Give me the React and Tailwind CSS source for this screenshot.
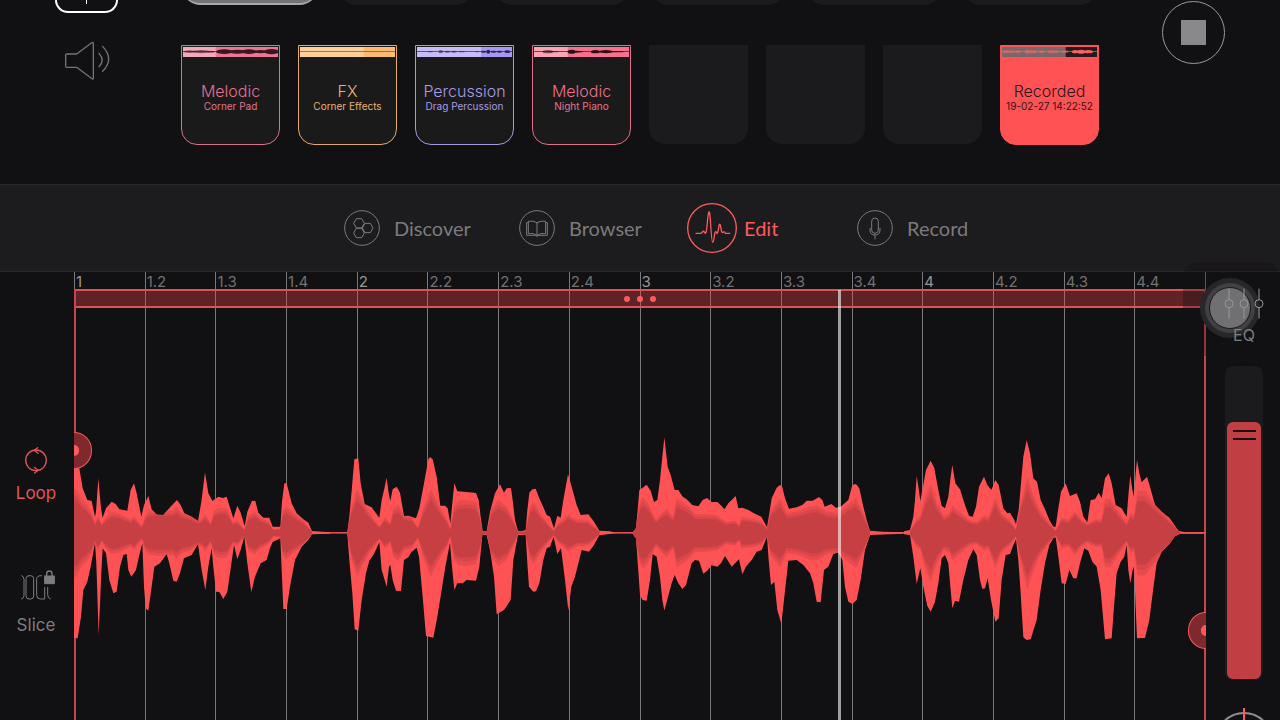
import { useState } from "react";
import clsx from "clsx";

const BEATS = [
  "1", "1.2", "1.3", "1.4",
  "2", "2.2", "2.3", "2.4",
  "3", "3.2", "3.3", "3.4",
  "4", "4.2", "4.3", "4.4",
];

// Waveform units: 3 per pixel, MID is the zero line.
const MID = 339;

// One entry per phrase of the recording; x values are relative to offset.
const PHRASES = [
  {
    offset: 0,
    top: "222,140 238,145 248,205 262,240 275,243 285,290 288,275 295,175 303,265 308,293 318,265 335,245 347,252 358,268 382,272 392,210 402,190 410,220 424,290 432,255 445,228 455,268 470,284 490,285 510,262 531,240 542,255 553,280 575,290 594,303 604,245 615,157 625,220 637,243 655,230 668,234 680,230 700,295 712,257 722,278 734,318 742,275 756,242 766,243 775,278 790,293 808,293 818,320 841,320 846,245 853,190 860,190 875,250 890,280 910,298 925,308 936,333 990,337",
    bottom: "222,655 233,655 243,590 250,510 262,485 272,440 285,370 289,430 296,645 304,460 308,385 318,400 328,480 340,520 350,515 360,440 370,405 380,402 385,450 394,470 408,450 418,405 427,370 432,500 437,565 445,572 455,500 463,440 480,430 500,402 508,430 520,482 530,485 540,460 552,415 575,405 594,372 605,450 616,510 625,440 635,385 640,440 648,515 658,516 670,537 682,515 690,460 702,375 712,418 722,390 733,350 742,430 754,517 765,470 782,430 800,420 810,385 818,366 841,355 846,470 850,567 860,567 870,500 885,420 905,380 925,360 936,343 990,341",
    core: [[222, 100], [232, 95], [245, 75], [262, 62], [275, 45], [285, 22], [294, 40], [305, 20], [318, 35], [335, 47], [360, 43], [380, 35], [392, 30], [402, 38], [415, 25], [426, 15], [436, 40], [445, 48], [460, 50], [480, 52], [505, 50], [518, 50], [530, 58], [545, 45], [570, 40], [592, 28], [605, 30], [616, 42], [632, 22], [642, 50], [660, 57], [680, 55], [698, 25], [712, 28], [734, 8], [745, 40], [765, 48], [780, 35], [805, 25], [820, 8], [841, 10], [848, 50], [858, 60], [880, 45], [910, 28], [936, 3]],
  },
  {
    offset: 990,
    top: "52,335 58,290 66,200 73,118 85,115 92,190 104,252 125,262 148,293 155,240 162,210 170,173 176,220 181,243 188,208 200,200 210,218 222,288 235,287 258,295 268,265 282,190 295,118 300,111 308,118 320,170 331,257 345,257 353,265 361,310 367,250 373,190 382,214 410,216 438,219 446,240 452,290 458,333 470,333 480,275 495,220 510,193 522,218 530,205 543,204 548,240 555,300 564,332 573,334 587,330 592,270 598,218 607,208 617,206 628,235 640,262 650,285 660,290 672,325 682,287 692,293 700,240 714,163 725,200 740,255 752,285 775,283 790,302 808,332 840,334 856,338",
    bottom: "52,343 58,420 67,520 74,628 85,632 95,540 108,460 118,422 132,402 148,367 155,450 170,500 177,440 181,435 188,480 198,512 213,513 222,420 235,412 245,395 260,383 267,410 278,530 288,648 310,653 322,590 335,510 346,440 360,368 366,440 373,510 382,490 398,490 410,480 438,482 448,440 457,345 470,345 480,390 492,470 500,583 522,570 542,540 550,420 564,345 587,345 592,430 597,500 610,515 618,514 628,490 640,420 650,385 660,380 671,350 682,402 693,385 705,480 715,572 724,500 735,470 755,390 777,395 790,378 808,346 856,340",
    core: [[52, 3], [65, 60], [82, 99], [100, 70], [118, 45], [148, 15], [165, 35], [181, 22], [190, 55], [205, 63], [222, 40], [245, 35], [264, 12], [280, 55], [302, 99], [318, 75], [335, 50], [350, 32], [361, 8], [372, 60], [385, 72], [410, 74], [438, 70], [448, 45], [458, 4], [470, 4], [485, 55], [505, 74], [530, 60], [550, 30], [564, 3], [587, 4], [600, 60], [612, 70], [630, 45], [655, 20], [671, 5], [685, 22], [700, 30], [714, 42], [740, 30], [775, 28], [808, 4]],
  },
  {
    offset: 1860,
    top: "38,338 48,325 53,270 58,210 68,203 80,194 92,212 102,246 112,240 120,180 127,110 133,52 143,140 152,165 164,210 175,210 188,230 200,238 217,255 235,259 248,240 261,234 275,246 292,246 305,258 313,268 325,250 347,228 355,265 367,263 385,270 405,281 424,290 441,322 448,280 455,235 470,203 480,195 486,198 495,235 507,266 530,262 548,254 560,242 578,242 597,231 607,240 614,260 634,252 648,263 662,260 685,240 697,195 708,192 718,205 730,260 740,300 750,332 790,335 850,337",
    bottom: "38,341 48,355 54,440 60,525 68,540 80,542 90,480 98,402 110,410 120,470 127,540 133,572 143,535 155,490 164,465 175,490 187,507 198,495 215,430 225,420 237,422 250,461 262,452 275,436 292,440 303,430 315,408 335,440 357,418 367,463 378,440 395,420 410,395 425,390 441,350 446,420 453,495 463,485 472,570 484,612 492,540 505,422 530,420 550,435 570,460 580,490 590,545 602,547 612,450 625,440 640,402 655,397 667,420 675,500 685,545 697,552 710,540 722,480 735,390 750,345 850,341",
    core: [[38, 2], [50, 30], [60, 70], [70, 80], [85, 65], [108, 30], [125, 45], [140, 55], [160, 35], [170, 78], [185, 70], [205, 60], [225, 42], [260, 42], [290, 40], [318, 25], [345, 28], [358, 18], [365, 35], [400, 32], [425, 25], [441, 10], [452, 50], [480, 78], [500, 45], [530, 48], [570, 60], [590, 62], [620, 48], [655, 45], [680, 62], [708, 78], [725, 55], [750, 5]],
  },
  {
    offset: 2670,
    top: "42,334 60,330 70,290 75,240 80,168 86,205 91,243 98,205 108,150 122,122 133,145 145,210 155,258 165,265 175,230 182,170 187,135 196,190 210,208 225,255 237,287 248,290 258,260 267,200 282,170 292,195 304,210 316,180 326,195 340,265 352,280 360,278 370,295 378,312 386,270 393,190 400,110 410,60 420,100 430,175 441,185 452,240 465,268 478,300 490,320 497,320 505,265 513,215 527,190 540,228 560,220 570,245 580,290 592,307 602,240 615,238 626,218 635,235 645,175 656,160 665,190 677,255 695,265 710,290 716,215 721,165 727,210 732,230 737,160 741,120 748,160 755,187 771,170 780,200 795,255 815,275 838,293 850,310 865,332 885,337 940,337",
    bottom: "42,343 60,345 70,410 80,492 91,445 100,500 112,558 122,575 135,545 145,490 155,415 165,405 175,430 182,510 187,565 195,543 207,545 220,480 235,420 250,388 260,405 270,480 277,507 285,505 293,475 303,540 316,605 326,595 335,480 347,405 360,402 370,375 378,358 385,420 392,520 400,652 410,660 422,658 440,600 452,510 465,430 478,375 490,355 497,352 505,410 515,490 527,492 538,450 550,475 560,475 570,430 583,385 595,392 607,425 620,440 632,510 645,658 665,655 672,560 680,460 692,425 703,410 710,375 715,450 721,490 728,450 732,440 737,560 741,655 765,654 778,600 788,520 800,430 815,395 838,372 855,348 870,341 940,341",
    core: [[60, 4], [80, 32], [91, 38], [105, 80], [122, 110], [140, 70], [162, 38], [178, 45], [187, 62], [205, 50], [240, 28], [260, 25], [282, 40], [295, 35], [316, 80], [335, 45], [360, 28], [378, 8], [390, 60], [412, 127], [430, 85], [450, 50], [478, 22], [497, 5], [515, 35], [535, 30], [555, 50], [575, 30], [592, 22], [620, 32], [635, 30], [645, 75], [660, 78], [680, 55], [710, 22], [722, 45], [732, 40], [742, 95], [765, 95], [790, 70], [815, 50], [850, 20], [870, 3]],
  },
];

const LAYERS = [
  { gain: 1.34, fill: "#e84b4e" },
  { gain: 1.16, fill: "#d84649" },
  { gain: 1, fill: "#c63f42" },
];

function outline({ top, bottom }) {
  return `${top} ${bottom.split(" ").reverse().join(" ")}`;
}

function mirrored(core, gain) {
  const upper = core.map(([x, a]) => `${x},${MID - a * gain}`);
  const lower = core.map(([x, a]) => `${x},${MID + a * gain}`).reverse();
  return [...upper, ...lower].join(" ");
}

function Waveform() {
  return (
    <svg
      className="absolute inset-x-0 top-[158px] h-[220px] w-full"
      viewBox="222 30 3396 660"
      preserveAspectRatio="none"
      aria-hidden="true"
    >
      <rect x="222" y={MID - 3} width="3396" height="5" fill="#e64a4d" />
      {PHRASES.map((phrase, i) => (
        <g key={phrase.offset} transform={`translate(${phrase.offset} 0)`}>
          <clipPath id={`phrase-${i}`}>
            <polygon points={outline(phrase)} />
          </clipPath>
          <polygon points={outline(phrase)} fill="#ff5255" />
          <g clipPath={`url(#phrase-${i})`}>
            {LAYERS.map(({ gain, fill }) => (
              <polygon
                key={fill}
                points={mirrored(phrase.core, gain)}
                fill={fill}
              />
            ))}
          </g>
        </g>
      ))}
    </svg>
  );
}

// blobs: [centre x, half width, half height] on a 288 x 30 strip
const TILES = [
  {
    title: "Melodic",
    name: "Corner Pad",
    tone: "border-[#d9708c] text-[#e2718f]",
    base: "#ee7596",
    played: "#f4a9bb",
    wave: "#3a1620",
    progress: 99,
    blobs: [[20, 18, 4], [55, 25, 5], [85, 12, 3], [125, 25, 7], [165, 28, 6], [200, 22, 7], [235, 24, 5], [268, 22, 8]],
  },
  {
    title: "FX",
    name: "Corner Effects",
    tone: "border-[#e3ab66] text-[#eab272]",
    base: "#fdbb72",
    played: "#fecf9b",
    wave: "#6b4a26",
    progress: 193,
    blobs: [],
  },
  {
    title: "Percussion",
    name: "Drag Percussion",
    tone: "border-[#a39ae0] text-[#a99be6]",
    base: "#a797f3",
    played: "#c7bbf8",
    wave: "#2b2350",
    progress: 194,
    blobs: [[40, 8, 2], [72, 7, 5], [92, 9, 3], [112, 9, 3], [135, 10, 2], [182, 5, 2], [202, 8, 3], [216, 6, 6], [232, 9, 3], [250, 8, 3], [274, 9, 4]],
  },
  {
    title: "Melodic",
    name: "Night Piano",
    tone: "border-[#dc7086] text-[#e8728c]",
    base: "#f7718f",
    played: "#fba5b4",
    wave: "#2a1018",
    progress: 102,
    blobs: [[42, 16, 5], [58, 18, 2], [114, 12, 6], [128, 20, 3], [186, 14, 5], [218, 20, 5], [245, 30, 2]],
  },
  null,
  null,
  null,
  {
    title: "Recorded",
    name: "19-02-27 14:22:52",
    tone: "border-[#ff5255] bg-[#ff5255] text-[#2c1517]",
    base: "#231b1d",
    played: "#75696b",
    wave: "#ff5f63",
    progress: 193,
    blobs: [[10, 10, 5], [26, 12, 4], [48, 10, 4], [78, 10, 6], [96, 12, 5], [120, 10, 4], [148, 10, 5], [164, 10, 4], [190, 12, 4], [222, 10, 5], [240, 12, 6], [262, 14, 5]],
  },
];

function Tile({ tile }) {
  if (!tile) {
    return <div className="h-[99px] rounded-b-2xl bg-[#1b1a1c]" />;
  }
  return (
    <button
      className={clsx(
        "flex h-[100px] flex-col overflow-hidden rounded-b-2xl border p-px",
        !tile.tone.includes("bg-") && "bg-[#1b1a1b]",
        tile.tone,
      )}
    >
      <svg
        className="h-[10px] w-full shrink-0"
        viewBox="0 0 288 30"
        preserveAspectRatio="none"
        aria-hidden="true"
      >
        <rect width="288" height="30" fill={tile.base} />
        <rect width={tile.progress} height="30" fill={tile.played} />
        <rect y="13" width="288" height="2" fill={tile.wave} />
        {tile.blobs.map(([x, rx, ry]) => (
          <ellipse
            key={x}
            cx={x}
            cy="14"
            rx={rx}
            ry={ry}
            fill={tile.wave}
            opacity={x < tile.progress ? 0.6 : 1}
          />
        ))}
      </svg>
      <span className="mt-[25px] w-full text-center text-base leading-[18px] font-light">
        {tile.title}
      </span>
      <span className="w-full text-center text-[10px] leading-3 whitespace-nowrap">
        {tile.name}
      </span>
    </button>
  );
}

function Header() {
  return (
    <header className="flex h-[184px] shrink-0 items-start">
      <div className="flex w-[181px] shrink-0 flex-col">
        <button
          aria-label="Add"
          className="ml-[55px] flex h-[13px] w-[63px] justify-center rounded-b-[14px] border-2 border-t-0 border-white"
        >
          <span className="h-1 w-px bg-white" />
        </button>
        <button aria-label="Volume" className="mt-[28px] ml-[64px] w-[46px]">
          <svg
            className="h-[40px] w-[46px]"
            viewBox="192 123 138 120"
            fill="none"
            stroke="#747375"
            strokeWidth="4"
            strokeLinejoin="round"
            strokeLinecap="round"
          >
            <path d="M200 162H230L274 129Q280 125 280 131V234Q280 240 274 235L230 202H200Q197 202 197 199V165Q197 162 200 162Z" />
            <path d="M297 160Q316 181 297 200M308 139Q344 178 308 214" />
          </svg>
        </button>
      </div>

      <div className="flex min-w-0 flex-1 flex-col gap-10">
        {/* upper tile row, scrolled out except for its lower edge */}
        <div className="flex h-[5px] items-end gap-[18px] overflow-hidden">
          <div className="h-[100px] flex-1 rounded-b-[20px] border-b-2 border-[#a9a8aa] bg-[#747375]" />
          {[1, 2, 3, 4, 5].map((n) => (
            <div
              key={n}
              className="h-[100px] flex-1 rounded-b-[20px] bg-[#1b1a1c]"
            />
          ))}
        </div>
        <div className="grid grid-cols-8 gap-[18px]">
          {TILES.map((tile, i) => (
            <Tile key={i} tile={tile} />
          ))}
        </div>
      </div>

      <div className="w-[181px] shrink-0 pt-px pl-[63px]">
        <button
          aria-label="Stop"
          className="flex size-[63px] items-center justify-center rounded-full border border-[#9a999b]"
        >
          <span className="size-[25px] bg-[#89888a]" />
        </button>
      </div>
    </header>
  );
}

function DiscoverIcon() {
  return (
    <g>
      {[[45, 40], [71, 54], [45, 69]].map(([x, y]) => (
        <polygon
          key={`${x}-${y}`}
          points={`${x - 16},${y} ${x - 8},${y - 14} ${x + 8},${y - 14} ${x + 16},${y} ${x + 8},${y + 14} ${x - 8},${y + 14}`}
        />
      ))}
    </g>
  );
}

function BookIcon() {
  return (
    <path d="M54 38Q42 31 28 34V71Q43 68 54 76Q65 68 80 71V34Q66 31 54 38V76M28 38H23V76H49L54 79L59 76H85V38H80" />
  );
}

function MicIcon() {
  return (
    <path d="M44 34Q44 24 54 24T64 34V60Q64 70 54 70T44 60ZM39 54V60Q39 75 54 75T69 60V54M54 75V88" />
  );
}

const TABS = [
  { id: "discover", label: "Discover", Icon: DiscoverIcon },
  { id: "browser", label: "Browser", Icon: BookIcon },
  { id: "edit", label: "Edit" },
  { id: "record", label: "Record", Icon: MicIcon },
];

function TabIcon({ Icon }) {
  if (!Icon) {
    return (
      <svg
        className="size-[50px]"
        viewBox="0 0 150 150"
        fill="none"
        stroke="currentColor"
        strokeWidth="4"
        strokeLinejoin="round"
        strokeLinecap="round"
      >
        <circle cx="75" cy="75" r="73" />
        <path d="M27 91H40Q44 91 47 86Q50 82 54 90Q58 95 61 60Q66 -2 70 50Q74 118 77 118Q80 118 83 92Q86 80 90 92Q93 90 96 68Q99 56 102 76Q104 92 108 88Q112 84 115 91H128" />
      </svg>
    );
  }
  return (
    <svg
      className="size-[36px]"
      viewBox="0 0 108 108"
      fill="none"
      stroke="currentColor"
      strokeWidth="3"
      strokeLinejoin="round"
    >
      <circle cx="54" cy="54" r="52" />
      <Icon />
    </svg>
  );
}

function Tabs() {
  return (
    <nav className="flex h-[88px] shrink-0 items-center justify-center border-y border-[#29282a] bg-[#1c1b1d] pl-[34px] font-['Lato',sans-serif] text-[20px]">
      {TABS.map(({ id, label, Icon }) => (
        <button
          key={id}
          className={clsx(
            "flex items-center gap-[7px]",
            id === "edit" ? "w-[163px] text-[#ff5a5d]" : "text-[#7b7a7c]",
            id === "record" && "w-[127px]",
            (id === "discover" || id === "browser") && "w-[175px]",
          )}
        >
          <span className="flex w-[50px] shrink-0 justify-center">
            <TabIcon Icon={Icon} />
          </span>
          {label}
        </button>
      ))}
    </nav>
  );
}

function Tools() {
  return (
    <aside className="flex w-[74px] shrink-0 flex-col items-center gap-[64px] pt-[175px] pr-[2px] text-[17px] leading-6">
      <button className="flex flex-col items-center gap-[7px] text-[#e2565a]">
        <svg
          className="h-[27px] w-[24px]"
          viewBox="72 82 72 81"
          fill="none"
          stroke="currentColor"
          strokeWidth="4"
          strokeLinecap="round"
          strokeLinejoin="round"
        >
          <circle cx="108" cy="122" r="31" />
          <path d="M113 84L103 92L114 101M103 143L114 152L104 160" />
        </svg>
        Loop
      </button>
      <button className="flex flex-col items-center gap-[12px] text-[#7d7c7e]">
        <svg
          className="h-[32px] w-[36px]"
          viewBox="56 447 108 96"
          fill="none"
          stroke="currentColor"
          strokeWidth="3"
          strokeLinecap="round"
          overflow="visible"
        >
          <path d="M67 467Q74 469 74 478V526Q74 535 67 537" />
          <rect x="80" y="467" width="23" height="70" rx="9" />
          <path d="M126 467Q112 466 112 478V526Q112 537 124 537H136V502M145 502V524Q145 535 153 537" />
          <path d="M142 468V461Q142 453 150 453T158 461V468" strokeWidth="4" />
          <rect x="136" y="468" width="29" height="23" fill="currentColor" />
        </svg>
        Slice
      </button>
    </aside>
  );
}

function RegionHandle({ side }) {
  return (
    <button
      aria-label={side === "start" ? "Loop start" : "Loop end"}
      className={clsx(
        "absolute flex h-[37px] w-[18px] items-center overflow-hidden border border-[#f0595d] bg-[#80292d]",
        side === "start"
          ? "top-[160px] left-0 rounded-r-full border-l-0"
          : "top-[340px] right-0 justify-end rounded-l-full border-r-0",
      )}
    >
      <span
        className={clsx(
          "h-[11px] w-[5px] bg-[#ff5a60]",
          side === "start" ? "rounded-r-full" : "rounded-l-full",
        )}
      />
    </button>
  );
}

function Timeline() {
  return (
    <main className="relative min-w-0 flex-1">
      <div className="flex h-full border-r border-[#79787a]">
        {BEATS.map((beat) => (
          <div
            key={beat}
            className={clsx(
              "flex-1 border-l border-[#79787a] pl-px text-[15px] leading-[20px]",
              beat.includes(".") ? "text-[#727173]" : "text-[#98979a]",
            )}
          >
            {beat}
          </div>
        ))}
      </div>

      <div className="absolute inset-x-0 top-[17px] bottom-0 border-x-2 border-[#c5484c]">
        <div className="flex h-[19px] items-center justify-center gap-[7px] border-y-2 border-[#dc5458] bg-[#f2484f]/35">
          {[0, 1, 2].map((n) => (
            <span key={n} className="size-[6px] rounded-full bg-[#ff5a5d]" />
          ))}
        </div>
      </div>

      <Waveform />

      <div className="absolute top-[18px] bottom-0 left-[67.5%] w-[3px] bg-white/60" />
      <RegionHandle side="start" />
      <RegionHandle side="end" />
    </main>
  );
}

function LevelFader() {
  const [level, setLevel] = useState(82);
  return (
    <label className="relative flex w-[38px] flex-1 flex-col justify-end rounded-lg bg-[#1b1a1c] px-[2px] pb-px">
      <span
        className="flex flex-col items-center gap-[6px] rounded-md bg-[#c13f42] pt-2"
        style={{ height: `${level}%` }}
      >
        <span className="h-[2px] w-[23px] bg-[#1c0c0d]" />
        <span className="h-[2px] w-[23px] bg-[#1c0c0d]" />
      </span>
      <input
        type="range"
        aria-label="Level"
        value={level}
        onChange={(e) => setLevel(Number(e.target.value))}
        className="absolute inset-0 h-full w-full opacity-0 [direction:rtl] [writing-mode:vertical-lr]"
      />
    </label>
  );
}

function Mixer() {
  return (
    <aside className="relative flex w-[74px] shrink-0 flex-col items-center pl-[2px]">
      {/* press highlight behind the EQ button */}
      <div className="absolute -top-[10px] -left-[23px] h-[94px] w-[97px] rounded-2xl bg-[#131214]/30" />
      <div className="absolute top-[6px] -left-[6px] flex size-[60px] items-center justify-center rounded-full bg-[#272628]">
        <div className="flex size-[50px] items-center justify-center rounded-full bg-[#414042]">
          <div className="size-[42px] rounded-full border border-[#1a191b] bg-[#706f71]" />
        </div>
      </div>

      <button className="relative flex flex-col items-center pt-4 text-base leading-[30px] text-[#7d7c7e]">
        <svg
          className="h-[32px] w-[40px]"
          viewBox="0 0 120 96"
          fill="none"
          stroke="#99989a"
          strokeWidth="3"
        >
          {[15, 60, 105].map((x) => (
            <g key={x}>
              <circle cx={x} cy="47" r="12" />
              <path d={`M${x} 2V35M${x} 59V92`} />
            </g>
          ))}
        </svg>
        EQ
      </button>

      <div className="mt-4 flex flex-1">
        <LevelFader />
      </div>

      <div className="flex h-10 justify-center overflow-hidden pt-7">
        <svg
          className="h-[60px] w-[60px] shrink-0"
          viewBox="0 0 60 60"
          fill="none"
          aria-hidden="true"
        >
          <circle cx="30" cy="33" r="28" stroke="#8d8c8e" strokeWidth="2" />
          <path d="M30 0V32" stroke="#ff5a5d" strokeWidth="2" />
        </svg>
      </div>
    </aside>
  );
}

function App() {
  return (
    <div className="flex h-screen w-full flex-col overflow-hidden bg-[#111012] font-['Inter',sans-serif]">
      <Header />
      <Tabs />
      <div className="flex min-h-0 flex-1">
        <Tools />
        <Timeline />
        <Mixer />
      </div>
    </div>
  );
}

export default App;
